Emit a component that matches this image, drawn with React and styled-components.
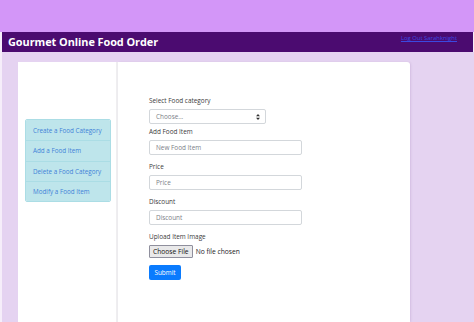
import React from "react";
import styled, { createGlobalStyle } from "styled-components";

const Global = createGlobalStyle`
  html, body { margin: 0; padding: 0; }
  body {
    background: #f6eefa;
    font-family: "Open Sans", "Noto Sans", sans-serif;
    width: 474px;
    height: 322px;
    overflow: hidden;
  }
  * { box-sizing: border-box; }
`;

const Page = styled.div`
  display: flex;
  flex-direction: column;
  height: 322px;
`;

const TopBand = styled.div`
  height: 32px;
  background: #d396f8;
  flex-shrink: 0;
`;

const Header = styled.header`
  height: 20px;
  margin-left: 2px;
  margin-right: 1px;
  background: #4b0b70;
  display: flex;
  align-items: center;
  justify-content: space-between;
  padding: 0 16px 0 6px;
  flex-shrink: 0;
`;

const Title = styled.h1`
  margin: 0;
  color: #ffffff;
  font-size: 10.9px;
  font-weight: 700;
  letter-spacing: -0.05px;
  line-height: 20px;
`;

const LogOut = styled.a`
  color: #3b49e0;
  font-size: 5.9px;
  text-decoration: underline;
  align-self: flex-start;
  margin-top: 2px;
`;

const Content = styled.div`
  flex: 1;
  margin-left: 2px;
  background: #e5d3f1;
  display: flex;
  padding: 10px 0 0 16px;
`;

const Side = styled.aside`
  width: 100px;
  background: #ffffff;
  padding: 57px 5px 0 7px;
  border-right: 2px solid #efeef0;
`;

const List = styled.ul`
  list-style: none;
  margin: 0;
  padding: 0;
  border-radius: 2px;
  overflow: hidden;
  border: 1px solid #abdde5;
`;

const Item = styled.li`
  height: 20.25px;
  background: #bee5eb;
  color: #3f82d8;
  font-size: 6.3px;
  padding-left: 7px;
  display: flex;
  align-items: center;
  border-top: ${(p) => (p.$first ? "none" : "1px solid #abdde5")};
`;

const Main = styled.main`
  width: 292px;
  background: #ffffff;
  border-top-right-radius: 3px;
  padding: 34px 0 0 31px;
  box-shadow: 1px 0 2px rgba(120, 80, 150, 0.15);
`;

const Group = styled.div`
  margin-bottom: ${(p) => p.$mb ?? 7}px;
`;

const Label = styled.label`
  display: block;
  font-size: 6.4px;
  line-height: 10px;
  color: #3a3a3a;
  margin-bottom: 3px;
`;

const Field = styled.div`
  width: ${(p) => p.$w}px;
  height: 15px;
  border: 1px solid #d3d7db;
  border-radius: 2px;
  display: flex;
  align-items: center;
  justify-content: space-between;
  padding: 0 5px 0 6px;
  font-size: 6.4px;
  color: #7a8087;
  background: #fff;
`;

const Arrows = styled.svg`
  width: 4px;
  height: 6px;
`;

const FileRow = styled.div`
  display: flex;
  align-items: center;
  gap: 3px;
  height: 12.5px;
  font-size: 6.7px;
  color: #222;
`;

const FileButton = styled.span`
  height: 12.5px;
  padding: 0 3px;
  background: #e9e9ea;
  border: 1px solid #8f8f9d;
  border-radius: 1px;
  display: flex;
  align-items: center;
  color: #111;
`;

const Submit = styled.button`
  display: block;
  width: 32px;
  height: 15px;
  padding: 0;
  border: none;
  border-radius: 2px;
  background: #0a7bfe;
  color: #ffffff;
  font-family: inherit;
  font-size: 6.4px;
`;

const links = [
  "Create a Food Category",
  "Add a Food Item",
  "Delete a Food Category",
  "Modify a Food Item",
];

export default function App() {
  return (
    <Page>
      <Global />
      <TopBand />
      <Header>
        <Title>Gourmet Online Food Order</Title>
        <LogOut href="#">Log Out Sarahknight</LogOut>
      </Header>
      <Content>
        <Side>
          <List>
            {links.map((l, i) => (
              <Item key={l} $first={i === 0}>
                {l}
              </Item>
            ))}
          </List>
        </Side>
        <Main>
          <Group $mb={3}>
            <Label>Select Food category</Label>
            <Field $w={117}>
              <span>Choose...</span>
              <Arrows viewBox="0 0 4 6">
                <path d="M2 0 L4 2.3 H0 Z M2 6 L4 3.7 H0 Z" fill="#333" />
              </Arrows>
            </Field>
          </Group>
          <Group>
            <Label>Add Food Item</Label>
            <Field $w={153}>New Food Item</Field>
          </Group>
          <Group>
            <Label>Price</Label>
            <Field $w={153}>Price</Field>
          </Group>
          <Group>
            <Label>Discount</Label>
            <Field $w={153}>Discount</Field>
          </Group>
          <Group $mb={7.5}>
            <Label>Upload Item Image</Label>
            <FileRow>
              <FileButton>Choose File</FileButton>
              <span>No file chosen</span>
            </FileRow>
          </Group>
          <Submit>Submit</Submit>
        </Main>
      </Content>
    </Page>
  );
}
